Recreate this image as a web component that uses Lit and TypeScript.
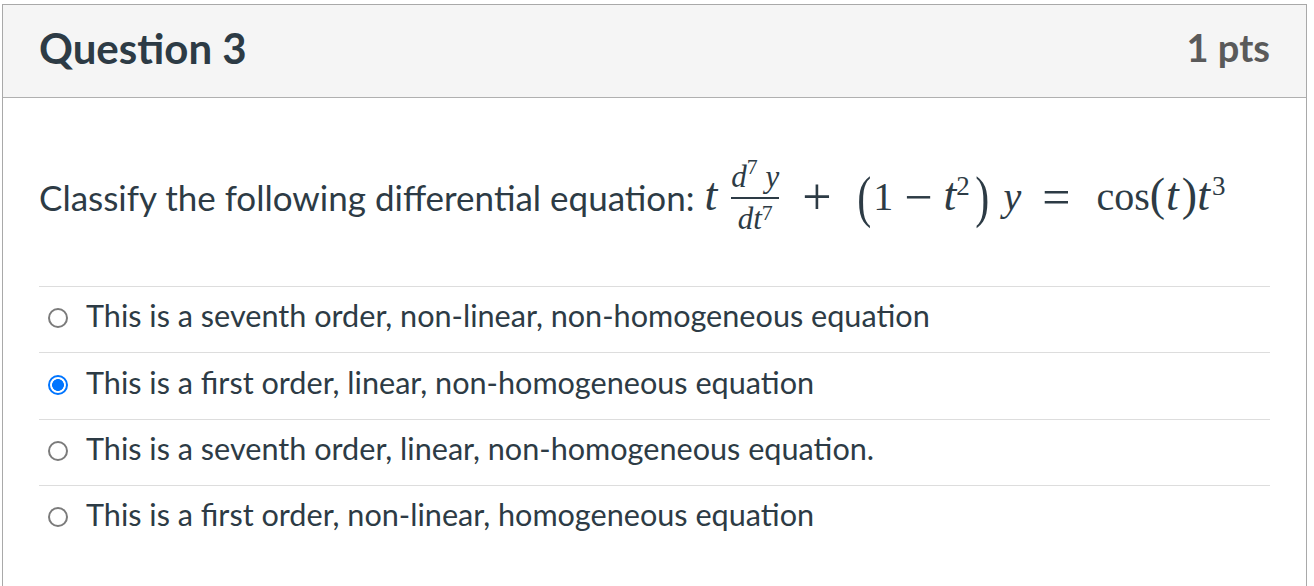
import { LitElement, html, css } from "lit";
import { customElement } from "lit/decorators.js";

const answers = [
  { text: "This is a seventh order, non-linear, non-homogeneous equation", checked: false },
  { text: "This is a first order, linear, non-homogeneous equation", checked: true },
  { text: "This is a seventh order, linear, non-homogeneous equation.", checked: false },
  { text: "This is a first order, non-linear, homogeneous equation", checked: false },
];

@customElement("app-root")
export class AppRoot extends LitElement {
  static styles = css`
    :host {
      display: block;
      height: 586px;
      overflow: hidden;
      padding: 4px 7px 0 2px;
      box-sizing: border-box;
      background: #fff;
      font-family: Lato, sans-serif;
      color: #2d3b45;
    }
    .card {
      border: 1px solid #a9a9a9;
      border-bottom: none;
      height: 600px;
    }
    .header {
      display: flex;
      justify-content: space-between;
      align-items: center;
      height: 92px;
      padding: 0 36px;
      background: #f5f5f5;
      border-bottom: 1px solid #b0b0b0;
    }
    .title {
      font-size: 42px;
      font-weight: 700;
      margin-bottom: 6px;
    }
    .pts {
      font-size: 38px;
      font-weight: 700;
      color: #5a5a5a;
      margin-bottom: 8px;
    }
    .body {
      padding: 0 36px;
    }
    .question {
      display: flex;
      align-items: center;
      height: 178px;
      padding-top: 10px;
      font-size: 35px;
      white-space: nowrap;
    }
    .math {
      display: flex;
      align-items: center;
      margin-left: 10px;
      font-family: "Liberation Serif", serif;
      font-size: 40px;
      line-height: 1;
    }
    .i {
      font-style: italic;
    }
    .t {
      font-style: italic;
      font-size: 46px;
      line-height: 0;
    }
    sup {
      font-size: 27px;
      line-height: 0;
      vertical-align: 15px;
    }
    .frac {
      display: flex;
      flex-direction: column;
      align-items: center;
      width: 48px;
      margin: 0 23px 0 14px;
      font-size: 31px;
    }
    .frac sup {
      font-size: 22px;
      vertical-align: 9px;
    }
    .num {
      height: 36px;
      line-height: 32px;
      white-space: nowrap;
      border-bottom: 2px solid #2d3b45;
      align-self: stretch;
      text-align: center;
    }
    .frac .num sup {
      vertical-align: 13px;
    }
    .den {
      height: 34px;
      line-height: 40px;
      white-space: nowrap;
    }
    .op {
      font-size: 52px;
    }
    .plus {
      margin-right: 23px;
    }
    .eq {
      font-size: 50px;
      margin: 0 26px 0 21px;
    }
    .minus {
      font-size: 50px;
      margin: 0 11px;
    }
    .paren {
      font-size: 56px;
      transform: scaleX(0.75);
    }
    .paren.close {
      margin-left: 3px;
    }
    .gap {
      margin-left: 12px;
    }
    .fn-paren {
      display: inline-block;
      font-size: 46px;
      line-height: 0;
    }
    .arg {
      margin: 0 3px 0 1px;
    }
    .cube {
      margin-left: 2px;
    }
    .row {
      display: flex;
      align-items: center;
      gap: 18px;
      height: 65.4px;
      border-top: 1px solid #ddd;
      padding-left: 9px;
      font-size: 30.62px;
      white-space: nowrap;
    }
    .row .label {
      margin-bottom: 8px;
    }
    .radio {
      width: 20px;
      height: 20px;
      box-sizing: border-box;
      border-radius: 50%;
      border: 2px solid #7b7b7b;
      background: #fff;
      flex: none;
      margin-bottom: 3px;
    }
    .radio.on {
      border-color: #0075ff;
      background: radial-gradient(circle, #0075ff 0 5.6px, #fff 6.2px);
    }
  `;

  render() {
    return html`
      <div class="card">
        <div class="header">
          <div class="title">Question 3</div>
          <div class="pts">1 pts</div>
        </div>
        <div class="body">
          <div class="question">
            <span>Classify the following differential equation:</span>
            <span class="math">
              <span><span class="t">t</span></span>
              <span class="frac">
                <div class="num"><span class="i">d</span><sup>7</sup> <span class="i">y</span></div>
                <div class="den"><span class="i">dt</span><sup>7</sup></div>
              </span>
              <span class="op plus">+</span>
              <span class="paren">(</span>
              <span>1</span>
              <span class="minus">−</span>
              <span><span class="t">t</span><sup>2</sup></span>
              <span class="paren close">)</span>
              <span class="i gap">y</span>
              <span class="eq">=</span>
              <span>cos<span class="fn-paren">(</span><span class="t arg">t</span><span class="fn-paren">)</span><span class="t">t</span><sup class="cube">3</sup></span>
            </span>
          </div>
          ${answers.map(
            (a) => html`
              <div class="row">
                <span class="radio ${a.checked ? "on" : ""}"></span>
                <span class="label">${a.text}</span>
              </div>
            `
          )}
        </div>
      </div>
    `;
  }
}
